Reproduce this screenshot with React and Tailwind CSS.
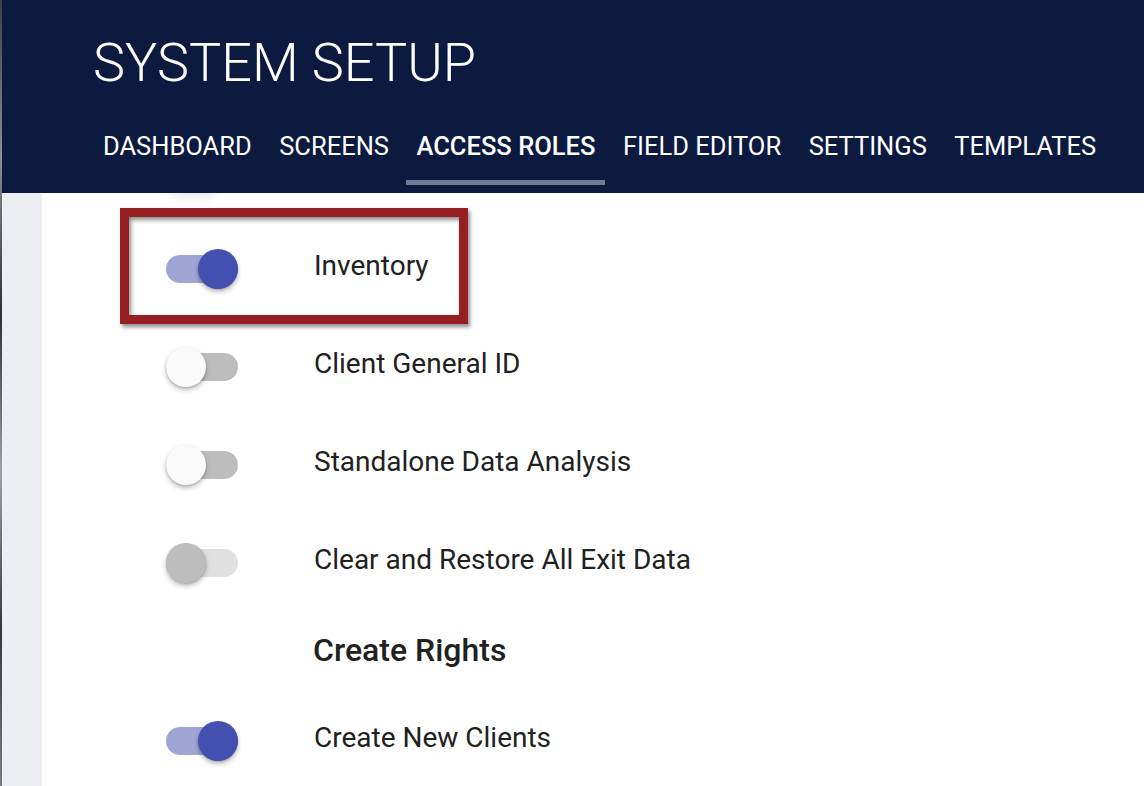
import React from "react";

function Toggle({ state }) {
  const track =
    state === "on" ? "bg-[#9fa6d6]" : state === "off" ? "bg-[#bdbdbd]" : "bg-[#e0e0e0]";
  const thumb =
    state === "on"
      ? "left-[32px] bg-[#4350af]"
      : state === "off"
      ? "left-0 bg-[#fafafa]"
      : "left-0 bg-[#bdbdbd]";
  return (
    <div className="relative w-[72px] h-[40px] flex items-center shrink-0">
      <div className={`w-full h-[28px] rounded-full ${track}`} />
      <div
        className={`absolute top-0 w-[40px] h-[40px] rounded-full shadow-[0_3px_5px_rgba(0,0,0,0.25),0_1px_2px_rgba(0,0,0,0.15)] ${thumb}`}
      />
    </div>
  );
}

function Row({ state, label }) {
  return (
    <div className="h-[98px] flex items-center pl-[124px]">
      <Toggle state={state} />
      <span className="ml-[76px] mb-[6px] text-[28px] text-[#212121] leading-none">{label}</span>
    </div>
  );
}

export default function App() {
  const tabs = ["DASHBOARD", "SCREENS", "ACCESS ROLES", "FIELD EDITOR", "SETTINGS", "TEMPLATES"];
  return (
    <div
      className="w-[1144px] h-[786px] overflow-hidden flex bg-white"
      style={{ fontFamily: "Roboto, 'Noto Sans', sans-serif" }}
    >
      <div className="w-[2px] shrink-0 bg-[linear-gradient(180deg,#3a3f4a,#8a8f99_20%,#2c2f36_40%,#9aa0aa_60%,#34373e_80%,#777c86)]" />
      <div className="flex-1 flex flex-col">
        <header className="h-[193px] bg-[#0c1a40] shrink-0 pl-[91px] flex flex-col">
          <h1 className="mt-[32px] text-[54px] font-light text-white leading-[62px]">
            SYSTEM SETUP
          </h1>
          <nav className="mt-[37px] flex gap-[7.5px]">
            {tabs.map((t) => {
              const active = t === "ACCESS ROLES";
              return (
                <div key={t} className="flex flex-col items-center">
                  <span
                    className={`px-[10px] text-[25.5px] leading-[30px] text-white ${
                      active ? "font-medium" : "font-normal"
                    }`}
                  >
                    {t}
                  </span>
                  <div
                    className={`mt-[19px] h-[5px] w-full ${active ? "bg-[#6e7a96]" : "bg-transparent"}`}
                  />
                </div>
              );
            })}
          </nav>
        </header>
        <div className="flex-1 flex">
          <div className="w-[40px] shrink-0 bg-[#eceef2]" />
          <div className="flex-1 relative pt-[27px] overflow-hidden">
            <div className="absolute left-[128px] top-[-14px] w-[48px] h-[20px] rounded-full bg-[rgba(0,0,0,0.07)] blur-[4px]" />
            <div className="relative">
              <div className="absolute left-[78px] top-[-12px] w-[348px] h-[116px] border-[9px] border-[#951f23] shadow-[2px_3px_4px_rgba(0,0,0,0.45),inset_2px_3px_4px_rgba(0,0,0,0.45)] pointer-events-none" />
              <Row state="on" label="Inventory" />
            </div>
            <Row state="off" label="Client General ID" />
            <Row state="off" label="Standalone Data Analysis" />
            <Row state="disabled" label="Clear and Restore All Exit Data" />
            <div className="h-[80px] flex items-center pl-[271px]">
              <span className="text-[32px] font-medium text-[#212121] leading-none mb-[4px]">Create Rights</span>
            </div>
            <Row state="on" label="Create New Clients" />
          </div>
        </div>
      </div>
    </div>
  );
}
